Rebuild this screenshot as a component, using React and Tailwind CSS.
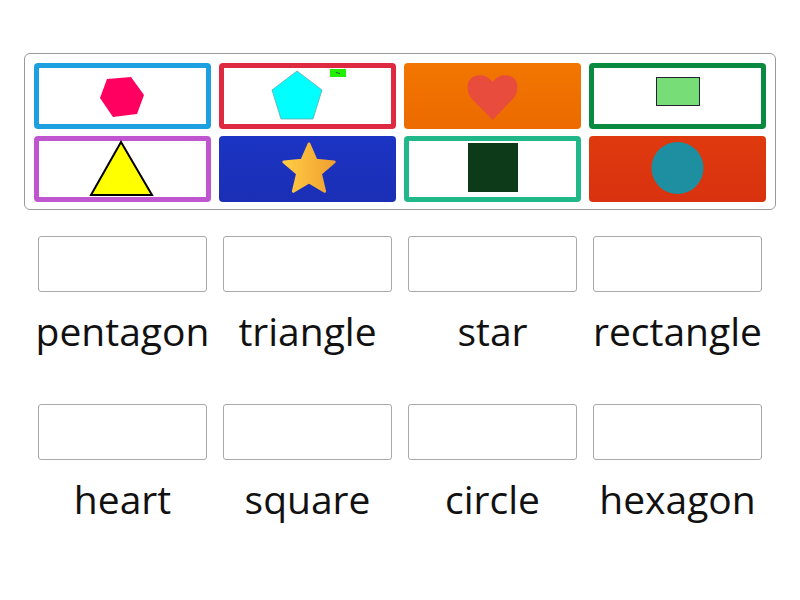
import React from "react";

const Card = ({ cls, children }) => (
  <div className={`relative h-[66px] rounded-[4px] ${cls}`}>
    <svg className="absolute inset-0" width="177" height="66" viewBox="0 0 177 66">
      {children}
    </svg>
  </div>
);

const words1 = ["pentagon", "triangle", "star", "rectangle"];
const words2 = ["heart", "square", "circle", "hexagon"];

const AnswerRow = ({ words, top }) => (
  <div className={`grid grid-cols-[185px_185px_185px_185px] ${top}`}>
    {words.map((w) => (
      <div key={w} className="flex flex-col items-center">
        <div className="w-[169px] h-[56px] border border-[#a8a8a8] rounded-[3px] bg-white" />
        <div className="mt-[16px] text-[39px] leading-[46px] text-[#111] whitespace-nowrap">{w}</div>
      </div>
    ))}
  </div>
);

export default function App() {
  return (
    <div className="w-[800px] h-[600px] bg-white pt-[53px] pl-[24px] font-['Open_Sans',sans-serif]">
      <div className="w-[752px] border border-[#999] rounded-[6px] pt-[9px] pb-[7px] px-[9px]">
        <div className="grid grid-cols-[177px_177px_177px_177px] gap-x-[8px] gap-y-[7px]">
          <Card cls="bg-white shadow-[inset_0_0_0_5px_#1ea0e0]">
            <polygon points="66,35 73,16 97,14 110,32 103,51 79,54" fill="#ff0060" />
          </Card>
          <Card cls="bg-white shadow-[inset_0_0_0_5px_#dd2a40]">
            <polygon points="78,8 103,27 94,56 62,56 53,27" fill="#00ffff" stroke="#6aa" strokeWidth="0.8" />
            <rect x="111" y="6" width="16" height="8" fill="#22ee00" />
            <path d="M117 10 q1 -1.5 2 0 t2 0" stroke="#335" strokeWidth="0.8" fill="none" />
          </Card>
          <Card cls="bg-gradient-to-b from-[#f27600] to-[#ec6a00]">
            <path
              transform="translate(63 11)"
              d="M25.5 46 L5 25 C-1.5 18 -1 6 7 2.5 C14 -0.5 21 2 25.5 8 C30 2 37 -0.5 44 2.5 C52 6 52.5 18 46 25 Z"
              fill="#e74c3c"
            />
          </Card>
          <Card cls="bg-white shadow-[inset_0_0_0_5px_#0a8a40]">
            <rect x="67.5" y="14.5" width="43" height="28" fill="#77dd77" stroke="#223" strokeWidth="1" />
          </Card>
          <Card cls="bg-white shadow-[inset_0_0_0_5px_#c055d0]">
            <polygon points="87,6 57,59 118,59" fill="#ffff00" stroke="#000" strokeWidth="2" />
          </Card>
          <Card cls="bg-gradient-to-b from-[#1c34c4] to-[#1a2fb5]">
            <defs>
              <linearGradient id="sg" x1="0" y1="0" x2="1" y2="0">
                <stop offset="0" stopColor="#ffcc44" />
                <stop offset="1" stopColor="#f0a030" />
              </linearGradient>
            </defs>
            <polygon
              points="90,8 97.05,24.29 115.2,25.9 101.41,37.71 105.6,55.3 90,46 74.4,55.3 78.59,37.71 64.8,25.9 82.95,24.29"
              fill="url(#sg)"
              stroke="url(#sg)"
              strokeWidth="3"
              strokeLinejoin="round"
            />
          </Card>
          <Card cls="bg-white shadow-[inset_0_0_0_5px_#20b888]">
            <rect x="64" y="7" width="50" height="49" fill="#0d3a18" />
          </Card>
          <Card cls="bg-gradient-to-b from-[#df3a0e] to-[#d83210]">
            <circle cx="88.5" cy="32" r="26" fill="#1e8fa0" />
          </Card>
        </div>
      </div>
      <div className="-ml-[24px] pl-[30px]">
        <AnswerRow words={words1} top="mt-[26px]" />
        <AnswerRow words={words2} top="mt-[50px]" />
      </div>
    </div>
  );
}
